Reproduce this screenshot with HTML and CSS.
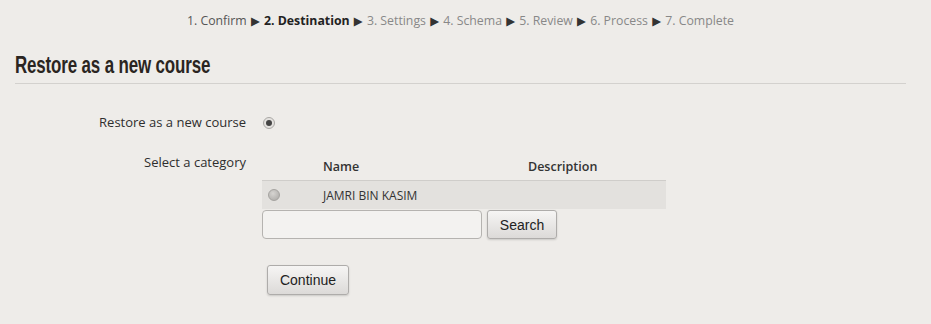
FILE: index.html
```
<!DOCTYPE html>
<html>
<head>
<meta charset="utf-8">
<link rel="stylesheet" href="styles.css">
</head>
<body>
<div class="page">
  <div class="steps">
    <span class="step">1. Confirm</span> <span class="arrow">&#9654;</span>
    <span class="step current">2. Destination</span> <span class="arrow">&#9654;</span>
    <span class="step future">3. Settings</span> <span class="arrow">&#9654;</span>
    <span class="step future">4. Schema</span> <span class="arrow">&#9654;</span>
    <span class="step future">5. Review</span> <span class="arrow">&#9654;</span>
    <span class="step future">6. Process</span> <span class="arrow">&#9654;</span>
    <span class="step future">7. Complete</span>
  </div>

  <div class="titlebar"><h2 class="title">Restore as a new course</h2></div>

  <div class="form">
    <div class="row row-first">
      <div class="label">Restore as a new course</div>
      <div class="field"><span class="radio checked"></span></div>
    </div>
    <div class="row row-cat">
      <div class="label">Select a category</div>
      <div class="field">
        <div class="cattable">
          <div class="thead">
            <div class="c-sel"></div>
            <div class="c-name">Name</div>
            <div class="c-desc">Description</div>
          </div>
          <div class="trow">
            <div class="c-sel"><span class="radio"></span></div>
            <div class="c-name">JAMRI BIN KASIM</div>
            <div class="c-desc"></div>
          </div>
        </div>
        <div class="search">
          <input class="searchbox" type="text">
          <button class="btn btn-search" type="button">Search</button>
        </div>
      </div>
    </div>
    <div class="row row-continue">
      <div class="label"></div>
      <div class="field"><button class="btn btn-continue" type="button">Continue</button></div>
    </div>
  </div>
</div>
</body>
</html>
```
FILE: styles.css
```
html, body {
  margin: 0;
  padding: 0;
  background: #eeece9;
}
body {
  font-family: "Open Sans", "Lato", sans-serif;
  color: #333;
  width: 931px;
  height: 324px;
  overflow: hidden;
}
.page {
  padding: 0 25px 0 15px;
}
.steps {
  text-align: center;
  font-size: 12.3px;
  color: #555;
  padding-top: 12px;
  height: 18px;
  line-height: 18px;
}
.steps .current {
  font-weight: bold;
  color: #222;
}
.steps .future {
  color: #888;
}
.steps .arrow {
  font-family: "DejaVu Sans", sans-serif;
  font-size: 11.5px;
  color: #333;
  margin: 0 1px;
}
.titlebar {
  margin-top: 20px;
  height: 33px;
  border-bottom: 1px solid #d3d1ce;
  overflow: hidden;
}
.title {
  display: inline-block;
  margin: 0;
  font-family: "Liberation Sans", Arial, sans-serif;
  font-weight: bold;
  font-size: 24px;
  line-height: 29px;
  letter-spacing: -0.2px;
  color: #2a2521;
  transform: scaleX(0.705);
  transform-origin: 0 0;
}
.form {
  padding-top: 29px;
}
.row {
  display: grid;
  grid-template-columns: 231px 1fr;
  column-gap: 16px;
}
.label {
  text-align: right;
  font-size: 13px;
  line-height: 20px;
  color: #2e2e2e;
}
.field {
  display: flex;
  flex-direction: column;
  align-items: flex-start;
}
.row-first {
  margin-top: -1px;
}
.row-first .field {
  padding-top: 5px;
}
.row-cat {
  margin-top: 20px;
}
.radio {
  display: block;
  width: 10px;
  height: 10px;
  border-radius: 50%;
  background: radial-gradient(circle at 40% 35%, #d6d4d1, #a9a7a4);
  border: 1px solid #a5a3a0;
  position: relative;
  margin-left: 1px;
}
.radio.checked {
  background: #e4e2df;
  border-color: #aaa8a5;
}
.radio.checked::after {
  content: "";
  position: absolute;
  left: 2px;
  top: 2px;
  width: 6px;
  height: 6px;
  border-radius: 50%;
  background: #444;
}
.cattable {
  width: 404px;
  font-size: 12px;
}
.thead, .trow {
  display: grid;
  grid-template-columns: 61px 205px 1fr;
  align-items: center;
}
.thead {
  height: 29px;
  font-weight: 600;
  font-size: 12.5px;
  color: #333;
  border-bottom: 1px solid #cfcdca;
  box-sizing: border-box;
  align-items: end;
  padding-bottom: 5px;
}
.trow {
  height: 28px;
  background: #e3e1de;
  color: #333;
}
.trow .c-sel {
  padding-left: 5px;
}
.search {
  display: flex;
  gap: 5px;
  margin-top: 1px;
}
.searchbox {
  width: 220px;
  height: 29px;
  box-sizing: border-box;
  border: 1px solid #b5b3b0;
  border-radius: 4px;
  background: #f3f2f0;
  margin: 0;
}
.btn {
  font-family: "Liberation Sans", Arial, sans-serif;
  font-size: 14px;
  color: #222;
  border: 1px solid #aeacaa;
  border-radius: 3px;
  background: linear-gradient(#f6f5f4, #dcdad8);
  box-shadow: 0 1px 2px rgba(0,0,0,0.15);
  margin: 0;
  padding: 0;
  box-sizing: border-box;
}
.btn-search {
  width: 70px;
  height: 29px;
}
.row-continue {
  margin-top: 26px;
}
.btn-continue {
  margin-left: 5px;
  width: 82px;
  height: 30px;
}
```
